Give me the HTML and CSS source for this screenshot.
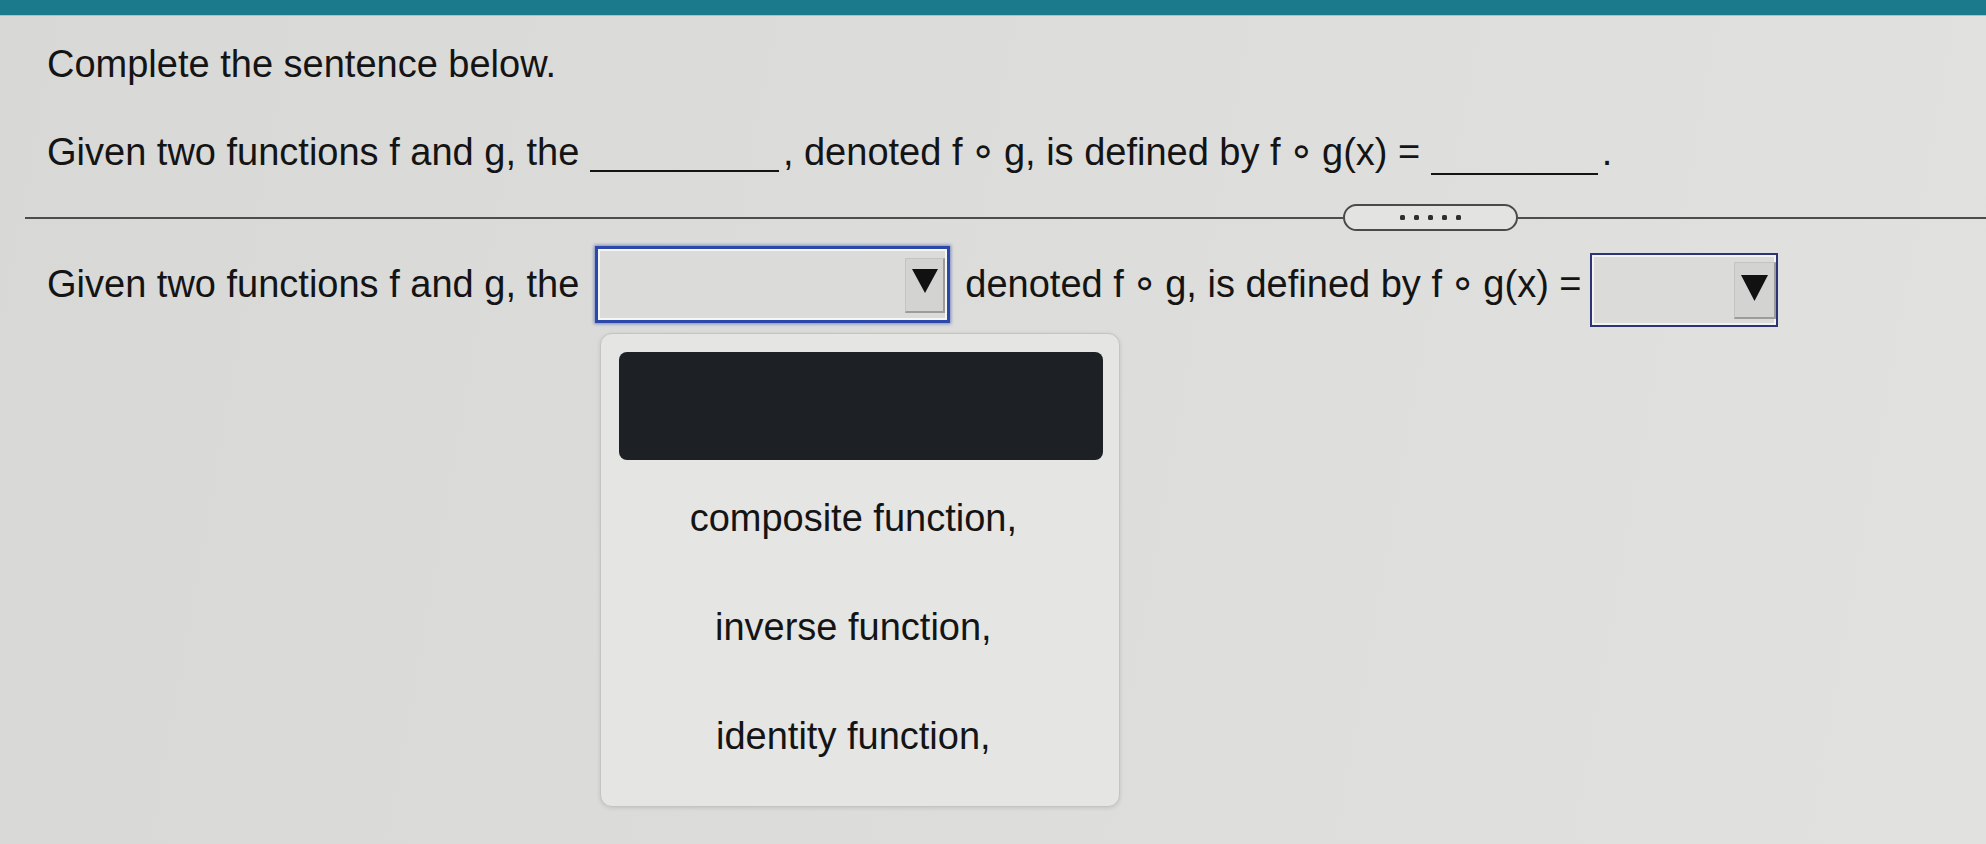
FILE: index.html
```html
<!DOCTYPE html>
<html lang="en">
<head>
<meta charset="utf-8">
<title>Complete the sentence</title>
<link rel="stylesheet" href="styles.css">
</head>
<body>
<div class="topbar"></div>
<main class="content">
  <p class="prompt">Complete the sentence below.</p>
  <p class="sentence">Given two functions f and g, the <span class="blank blank-1"></span>, denoted f <span class="ring">∘</span> g, is defined by f <span class="ring">∘</span> g(x) = <span class="blank blank-2"></span><span class="period">.</span></p>
  <div class="divider">
    <span class="rule rule-left"></span>
    <span class="pill"><i></i><i></i><i></i><i></i><i></i></span>
    <span class="rule rule-right"></span>
  </div>
  <div class="answer-row">
    <span class="label">Given two functions f and g, the</span>
    <div class="select-wrap">
      <div class="select select-1">
        <span class="arrow-btn arrow-btn-1"><svg width="26" height="24" viewBox="0 0 26 24"><polygon points="0,0 26,0 13,24" fill="#111"/></svg></span>
      </div>
      <div class="popup">
        <div class="popup-head"></div>
        <ul class="options">
          <li>composite function,</li>
          <li>inverse function,</li>
          <li>identity function,</li>
        </ul>
      </div>
    </div>
    <span class="label label-2">denoted f <span class="ring">∘</span> g, is defined by f <span class="ring">∘</span> g(x) =</span>
    <div class="select select-2">
      <span class="arrow-btn arrow-btn-2"><svg width="27" height="26" viewBox="0 0 27 26"><polygon points="0,0 27,0 13.5,26" fill="#111"/></svg></span>
    </div>
  </div>
</main>
</body>
</html>
```

FILE: styles.css
```css
html, body {
  margin: 0;
  padding: 0;
}

body {
  width: 1986px;
  height: 844px;
  overflow: hidden;
  background: linear-gradient(100deg, #d8d8d6 0%, #dcdcda 45%, #e1e1df 100%);
  font-family: "Liberation Sans", Arial, "DejaVu Sans", sans-serif;
  font-size: 38px;
  color: #141414;
}

.topbar {
  height: 15px;
  background: #1b7a8c;
  border-bottom: 1px solid #a7c3c9;
}

.content {
  padding: 26px 0 0 47px;
}

.prompt {
  margin: 0;
  line-height: 44px;
}

.sentence {
  margin: 44px 0 0;
  line-height: 44px;
  white-space: nowrap;
}

.ring {
  font-family: "DejaVu Sans", sans-serif;
  font-size: 42px;
  line-height: 0;
  margin: 0 -3px;
}

.blank {
  display: inline-block;
  height: 0;
  border-bottom: 2px solid #141414;
  vertical-align: -7px;
}

.blank-1 {
  width: 189px;
  margin-right: 4px;
}

.blank-2 {
  width: 167px;
  vertical-align: -10px;
}

.period {
  margin-left: 4px;
}

.divider {
  display: flex;
  align-items: center;
  margin: 29px 0 0 -22px;
  height: 27px;
}

.rule {
  height: 2px;
  background: #4d4d4d;
}

.rule-left {
  width: 1318px;
}

.rule-right {
  flex: 1;
}

.pill {
  box-sizing: border-box;
  width: 175px;
  height: 27px;
  border: 2px solid #4a4a4a;
  border-radius: 14px;
  background: #e3e3e1;
  display: flex;
  align-items: center;
  justify-content: center;
  gap: 9px;
}

.pill i {
  width: 5px;
  height: 5px;
  border-radius: 1.5px;
  background: #2e2e2e;
}

.answer-row {
  display: flex;
  align-items: center;
  margin-top: 10px;
  white-space: nowrap;
}

.label {
  line-height: 44px;
}

.select-wrap {
  position: relative;
  margin: 0 15px 0 16px;
}

.select {
  box-sizing: border-box;
  display: flex;
  justify-content: flex-end;
  align-items: flex-start;
  background: #dbdbd9;
}

.select-1 {
  width: 355px;
  height: 77px;
  border: 3px solid #2c48a8;
  box-shadow: 0 0 3px 1px rgba(44, 72, 168, 0.55), inset 0 0 0 2px #f6f6f4;
  padding: 9px 2px 0 0;
}

.select-2 {
  width: 188px;
  height: 74px;
  border: 2px solid #2d3476;
  box-shadow: inset 0 0 0 2px #f3f3f1;
  padding: 7px 0 0 0;
  margin: 12px 0 0 8px;
}

.arrow-btn {
  box-sizing: border-box;
  display: flex;
  align-items: center;
  justify-content: center;
  background: #d3d3d1;
  border-top: 1px solid #c4c4c2;
  border-left: 1px solid #c4c4c2;
  border-right: 2px solid #9c9c9a;
  border-bottom: 2px solid #9c9c9a;
}

.arrow-btn-1 {
  width: 40px;
  height: 55px;
  padding-bottom: 8px;
}

.arrow-btn-2 {
  width: 42px;
  height: 57px;
  padding-bottom: 4px;
}

.popup {
  position: absolute;
  left: 5px;
  top: 87px;
  box-sizing: border-box;
  width: 520px;
  height: 474px;
  background: #e5e5e3;
  border: 1px solid #c4c4c2;
  border-radius: 12px;
  box-shadow: 0 1px 4px rgba(0, 0, 0, 0.12);
  padding: 18px 16px 0 18px;
}

.popup-head {
  height: 108px;
  background: #1d2025;
  border-radius: 8px;
}

.options {
  list-style: none;
  margin: 4px 0 0;
  padding: 0 16px 0 0;
}

.options li {
  height: 109px;
  line-height: 109px;
  text-align: center;
}
```
